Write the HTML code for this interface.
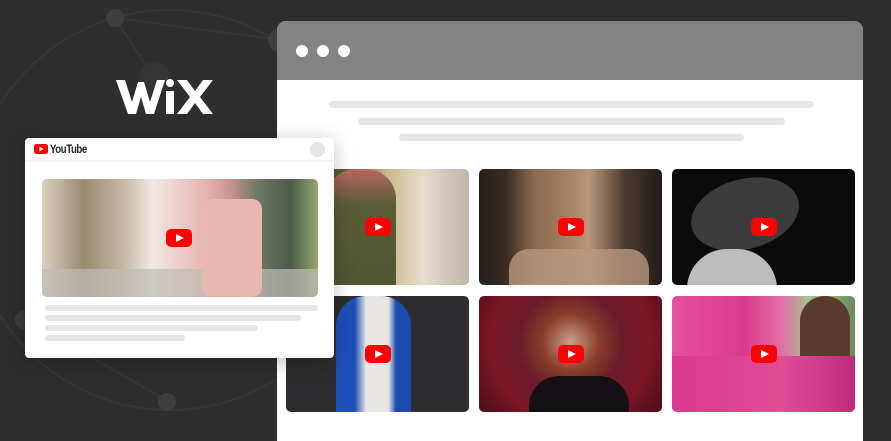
<!DOCTYPE html>
<html><head><meta charset="utf-8"><style>
*{margin:0;padding:0;box-sizing:border-box}
html,body{width:891px;height:421px;overflow:hidden;background:#2e2e2e;font-family:"Liberation Sans",sans-serif}
.abs{position:absolute}
.bar{position:absolute;height:7px;border-radius:4px;background:#e6e6e6}
.cell{position:absolute;width:183px;height:116px;border-radius:5px;overflow:hidden}
.play{position:absolute;left:50%;top:50%;width:26px;height:18px;margin:-9px 0 0 -13px;background:#f00;border-radius:5px}
.play:after{content:"";position:absolute;left:10px;top:4.5px;border-left:8px solid #fff;border-top:4.5px solid transparent;border-bottom:4.5px solid transparent}
</style></head><body>
<svg class="abs" style="left:0;top:0" width="891" height="421">
<g fill="none" stroke="#363636" stroke-width="2">
<circle cx="170" cy="210" r="200"/>
<line x1="115" y1="18" x2="155" y2="80"/>
<line x1="115" y1="18" x2="280" y2="40"/>
<line x1="25" y1="320" x2="170" y2="402"/>
</g>
<g fill="#3e3e3e">
<circle cx="115" cy="18" r="9"/><circle cx="155" cy="78" r="16" fill="#343434"/>
<circle cx="25" cy="320" r="10"/><circle cx="167" cy="402" r="9"/><circle cx="280" cy="40" r="12"/>
</g>
</svg>
<svg class="abs" style="left:116px;top:76px" width="98" height="40" viewBox="0 0 98 40">
<g fill="#fff">
<path d="M0 4h9l7 22 6-20h6l6 20 7-22h8L38 38h-8L25 21 20 38h-8z"/>
<circle cx="54" cy="7" r="4"/>
<path d="M50 15h8v23h-8z"/>
<path d="M61 4h10l8 11 8-11h10L84 21l13 17H87l-8-11-8 11H61l13-17z"/>
</g>
</svg>
<div class="abs" style="left:277px;top:21px;width:586px;height:420px;background:#fff;border-radius:9px 9px 0 0;overflow:hidden">
<div style="height:59px;background:#838383"></div>
<div class="abs" style="left:19px;top:24px;width:12px;height:12px;border-radius:50%;background:#fff"></div>
<div class="abs" style="left:40px;top:24px;width:12px;height:12px;border-radius:50%;background:#fff"></div>
<div class="abs" style="left:61px;top:24px;width:12px;height:12px;border-radius:50%;background:#fff"></div>
</div>
<div class="bar" style="left:329px;top:101px;width:485px"></div>
<div class="bar" style="left:358px;top:118px;width:427px"></div>
<div class="bar" style="left:399px;top:134px;width:345px"></div>
<div class="cell" style="left:286px;top:169px;background:linear-gradient(90deg,#6c7360 0,#4d5a33 25%,#59633e 35%,#c9b98a 55%,#e4ddcf 75%,#bdb6a8 100%)"><div class="abs" style="left:40px;top:0;width:70px;height:116px;background:linear-gradient(#b66 0,#5b5d36 30%,#4f5632 100%);border-radius:30px 30px 0 0"></div><div class="play"></div></div>
<div class="cell" style="left:479px;top:169px;background:linear-gradient(90deg,#241e1a 0,#3a2d22 15%,#8a6a50 30%,#a07c5e 45%,#b8957a 60%,#4a3b30 80%,#211b17 100%)"><div class="abs" style="left:30px;top:80px;width:140px;height:36px;background:#b8977e;opacity:.8;border-radius:20px 20px 0 0"></div><div class="play"></div></div>
<div class="cell" style="left:672px;top:169px;background:#0b0b0b"><div class="abs" style="left:18px;top:10px;width:110px;height:70px;border-radius:50%;background:#3c3c3c;transform:rotate(-15deg)"></div><div class="abs" style="left:15px;top:80px;width:90px;height:40px;border-radius:45px 45px 0 0;background:#bdbdbd"></div><div class="play"></div></div>
<div class="cell" style="left:286px;top:296px;background:#2d2d2f"><div class="abs" style="left:50px;top:0;width:75px;height:116px;background:linear-gradient(90deg,#1d4fb8 0,#1d4fb8 25%,#e8e6e2 40%,#e8e6e2 70%,#1b4ab0 80%);border-radius:30px 30px 0 0"></div><div class="play"></div></div>
<div class="cell" style="left:479px;top:296px;background:radial-gradient(circle at 50% 40%,#caa08a 0,#8a3d2a 25%,#6b1a2a 45%,#7a1525 70%,#4a0f18 100%)"><div class="abs" style="left:50px;top:80px;width:100px;height:40px;background:#151013;border-radius:30px 30px 0 0"></div><div class="play"></div></div>
<div class="cell" style="left:672px;top:296px;background:linear-gradient(90deg,#e6509e 0,#d93a8d 40%,#e070a8 60%,#a6c48f 75%,#6d8a5a 100%)"><div class="abs" style="left:128px;top:0;width:50px;height:80px;background:#5a3a2c;border-radius:25px 25px 10px 10px"></div><div class="abs" style="left:0;top:60px;width:183px;height:56px;background:linear-gradient(90deg,#d93a8d,#e04c96 60%,#c02b7a)"></div><div class="play"></div></div>
<div class="abs" style="left:25px;top:138px;width:309px;height:220px;background:#fff;border-radius:4px;box-shadow:0 4px 20px rgba(0,0,0,.25)">
<div style="height:24px;border-bottom:2px solid #f2f2f2;position:relative">
<svg class="abs" style="left:9px;top:6px" width="14" height="10" viewBox="0 0 14 10"><rect width="14" height="10" rx="2.5" fill="#f00"/><path d="M5.5 2.5v5l4-2.5z" fill="#fff"/></svg>
<span class="abs" style="left:25px;top:4px;font-size:12px;letter-spacing:-.5px;color:#222;font-weight:bold;transform:scaleX(.8);transform-origin:left">YouTube</span>
<div class="abs" style="right:9px;top:4px;width:15px;height:15px;border-radius:50%;background:#e6e6e6"></div>
</div>
<div class="abs" style="left:17px;top:41px;width:276px;height:118px;border-radius:5px;overflow:hidden;background:linear-gradient(90deg,#d9d1c1 0,#9a8a70 15%,#c8b9a6 30%,#efe8e4 40%,#e6b2ae 60%,#c9948e 68%,#6f7865 78%,#4d5a4c 90%,#95a86b 100%)">
<div class="abs" style="left:0;top:90px;width:276px;height:28px;background:#bfbcb6;opacity:.7"></div>
<div class="abs" style="left:160px;top:20px;width:60px;height:98px;background:#e8b7b0;border-radius:10px"></div>
<div class="play" style="margin-left:-14px"></div></div>
<div class="bar" style="left:20px;top:167px;width:273px;height:6px"></div>
<div class="bar" style="left:20px;top:177px;width:256px;height:6px"></div>
<div class="bar" style="left:20px;top:187px;width:213px;height:6px"></div>
<div class="bar" style="left:20px;top:197px;width:140px;height:6px"></div>
</div>
</body></html>
